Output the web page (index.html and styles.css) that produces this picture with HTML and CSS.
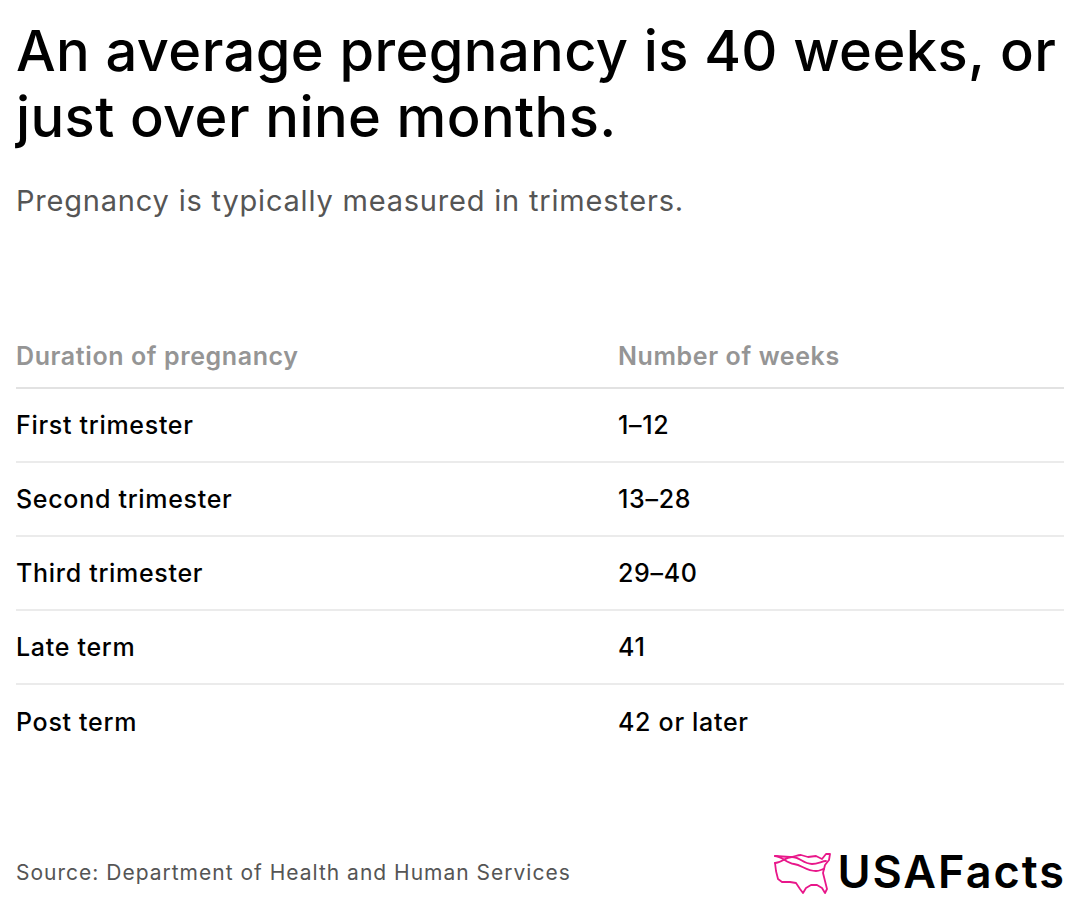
FILE: index.html
```html
<!DOCTYPE html>
<html lang="en">
<head>
<meta charset="utf-8">
<title>Pregnancy duration</title>
<link rel="stylesheet" href="styles.css">
</head>
<body>
<main class="page">
  <header class="head">
    <h1 class="title">An average pregnancy is 40 weeks, or just over nine months.</h1>
    <p class="subtitle">Pregnancy is typically measured in trimesters.</p>
  </header>
  <section class="tbl" role="table">
    <div class="row row-head" role="row">
      <span class="cell c1" role="columnheader">Duration of pregnancy</span>
      <span class="cell c2" role="columnheader">Number of weeks</span>
    </div>
    <div class="row" role="row"><span class="cell c1">First trimester</span><span class="cell c2">1–12</span></div>
    <div class="row" role="row"><span class="cell c1">Second trimester</span><span class="cell c2">13–28</span></div>
    <div class="row" role="row"><span class="cell c1">Third trimester</span><span class="cell c2">29–40</span></div>
    <div class="row" role="row"><span class="cell c1">Late term</span><span class="cell c2">41</span></div>
    <div class="row row-last" role="row"><span class="cell c1">Post term</span><span class="cell c2">42 or later</span></div>
  </section>
  <footer class="foot">
    <span class="source">Source: Department of Health and Human Services</span>
    <span class="logo">
      <svg class="logo-mark" viewBox="0 0 64 45" width="64" height="45" aria-hidden="true">
        <g fill="none" stroke="#e8178a" stroke-width="1.8" stroke-linejoin="round" stroke-linecap="round">
          <path d="M5,5 L20,6 C24,6 27,4 31,4 L38,6 L46,5 L52,8 L56,3 L60,3 L59,9 L55,14 L54,18 L53,22 L55,30 L57,38 L55,42 L52,37 L47,34 L41,34 L36,37 L33,42 L30,38 L26,32 L20,31 L12,31 L8,28 L6,20 L5,12"/>
          <path d="M5,12 C12,12 15,6 22,6 C30,6 33,13 42,13 C48,13 52,10 56,10"/>
          <path d="M5,5 C12,5 16,12 24,13 C32,14 36,20 46,20 C50,20 52,18 54,18"/>
        </g>
      </svg>
      <span class="logo-text">USAFacts</span>
    </span>
  </footer>
</main>
</body>
</html>
```
FILE: styles.css
```css
* { box-sizing: border-box; }
html, body { margin: 0; padding: 0; background: #fff; }
body {
  font-family: Inter, "Liberation Sans", Arial, sans-serif;
  color: #000;
}
.page {
  width: 1080px;
  height: 908px;
  padding: 18px 16px 0 16px;
  display: flex;
  flex-direction: column;
}
.title {
  margin: 0;
  font-size: 56px;
  line-height: 66px;
  font-weight: 500;
  letter-spacing: 0.4px;
  color: #000;
}
.subtitle {
  margin: 33px 0 0 0;
  font-size: 29px;
  line-height: 36px;
  font-weight: 400;
  letter-spacing: 0.8px;
  color: #555;
}
.tbl {
  margin-top: 122px;
  display: flex;
  flex-direction: column;
}
.row {
  display: flex;
  align-items: center;
  height: 74px;
  border-bottom: 2px solid #ebebeb;
  font-size: 25px;
  font-weight: 500;
  letter-spacing: 0.7px;
  color: #000;
}
.row-head {
  height: auto;
  align-items: flex-end;
  padding-bottom: 16px;
  line-height: 30px;
  border-bottom-color: #e2e2e2;
  color: #959595;
  font-weight: 600;
  letter-spacing: 0.6px;
}
.row-last { border-bottom: none; }
.c1 { width: 602px; flex: none; }
.c2 { flex: 1; }
.foot {
  margin-top: auto;
  margin-bottom: 11px;
  height: 50px;
  display: flex;
  align-items: center;
  justify-content: space-between;
}
.source {
  font-size: 21px;
  letter-spacing: 1px;
  color: #555;
}
.logo {
  display: flex;
  align-items: center;
  gap: 3px;
}
.logo-mark { flex: none; margin-top: 2px; }
.logo-text {
  font-size: 45px;
  line-height: 50px;
  font-weight: 600;
  letter-spacing: 2px;
  margin-right: -2px;
  color: #000;
}
```
